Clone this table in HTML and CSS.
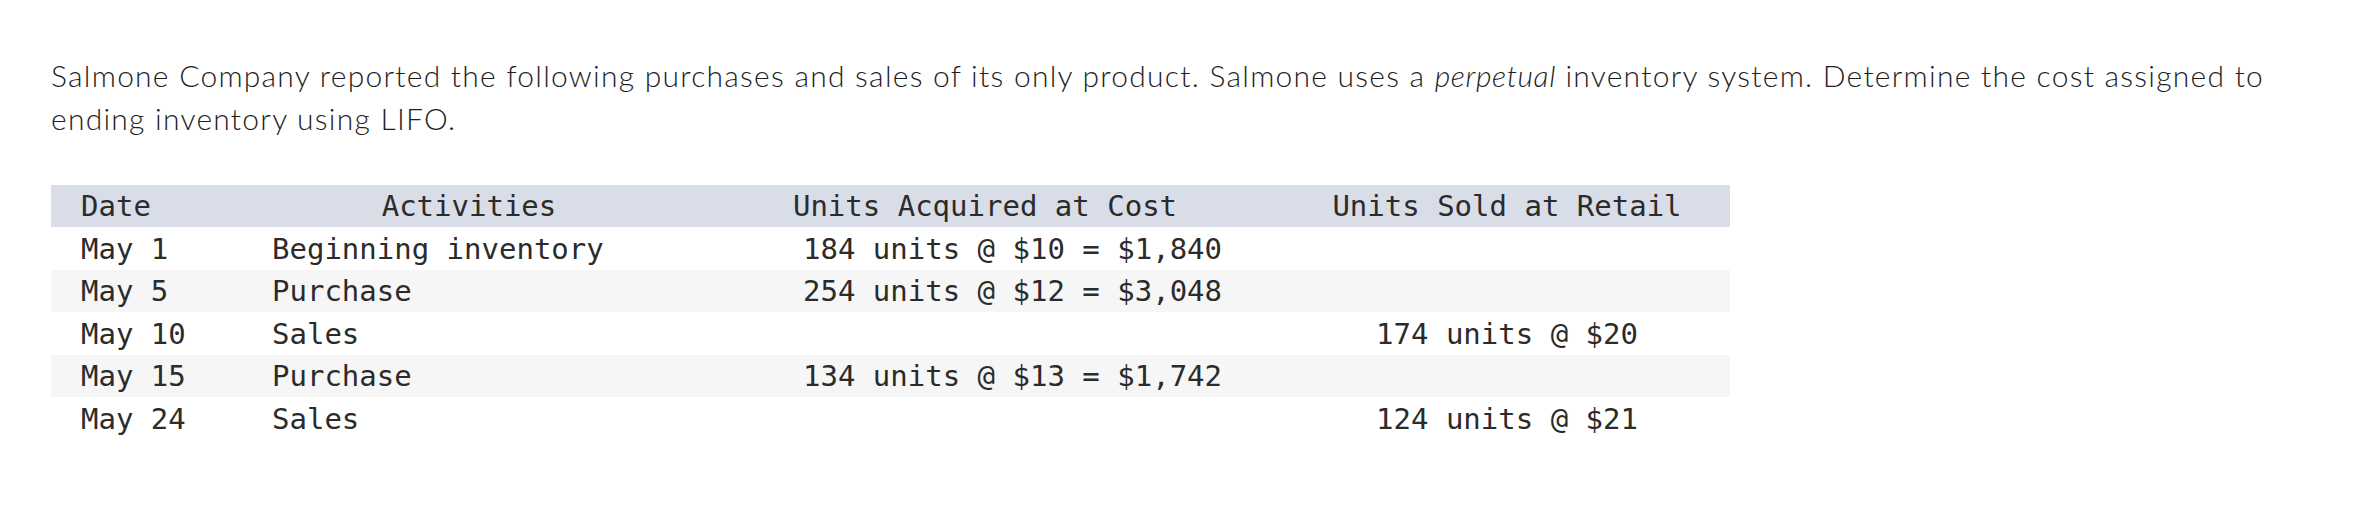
FILE: index.html
```html
<!DOCTYPE html>
<html lang="en">
<head>
<meta charset="utf-8">
<title>Salmone Company LIFO</title>
<link rel="stylesheet" href="styles.css">
</head>
<body>
<div class="page">
  <p class="question">Salmone Company reported the following purchases and sales of its only product. Salmone uses a <em>perpetual</em> inventory system. Determine the cost assigned to ending inventory using LIFO.</p>
  <div class="grid">
    <div class="row head">
      <div class="c-date">Date</div>
      <div class="c-act center">Activities</div>
      <div class="c-acq center">Units Acquired at Cost</div>
      <div class="c-sold">Units Sold at Retail</div>
    </div>
    <div class="row">
      <div class="c-date">May 1</div>
      <div class="c-act">Beginning inventory</div>
      <div class="c-acq">184 units @ $10 = $1,840</div>
      <div class="c-sold"></div>
    </div>
    <div class="row alt">
      <div class="c-date">May 5</div>
      <div class="c-act">Purchase</div>
      <div class="c-acq">254 units @ $12 = $3,048</div>
      <div class="c-sold"></div>
    </div>
    <div class="row">
      <div class="c-date">May 10</div>
      <div class="c-act">Sales</div>
      <div class="c-acq"></div>
      <div class="c-sold">174 units @ $20</div>
    </div>
    <div class="row alt">
      <div class="c-date">May 15</div>
      <div class="c-act">Purchase</div>
      <div class="c-acq">134 units @ $13 = $1,742</div>
      <div class="c-sold"></div>
    </div>
    <div class="row">
      <div class="c-date">May 24</div>
      <div class="c-act">Sales</div>
      <div class="c-acq"></div>
      <div class="c-sold">124 units @ $21</div>
    </div>
  </div>
</div>
</body>
</html>
```
FILE: styles.css
```css
html, body {
  margin: 0;
  padding: 0;
  background: #ffffff;
}

.page {
  padding: 54px 51px 0 51px;
}

.question {
  margin: 0;
  font-family: "Lato", "Open Sans", sans-serif;
  font-weight: 300;
  font-size: 30px;
  line-height: 43.4px;
  letter-spacing: 1.25px;
  color: #1e1e1e;
}

.question em {
  font-style: italic;
  letter-spacing: 0.6px;
}

.grid {
  margin-top: 44px;
  width: 1679px;
  font-family: "DejaVu Sans Mono", "Liberation Mono", monospace;
  font-size: 29px;
  color: #2b2b2b;
}

.row {
  display: grid;
  grid-template-columns: 191px 454px 578px 456px;
  height: 42.5px;
  align-items: center;
  white-space: pre;
}

.row.head {
  background: #d9dde7;
}

.row.alt {
  background: #f6f6f6;
}

.c-date {
  padding-left: 30px;
}

.c-act {
  padding-left: 30px;
}

.c-acq {
  padding-left: 107px;
}

.c-sold {
  padding-left: 10px;
  text-align: center;
}

.center {
  padding-left: 0;
  text-align: center;
}
```
